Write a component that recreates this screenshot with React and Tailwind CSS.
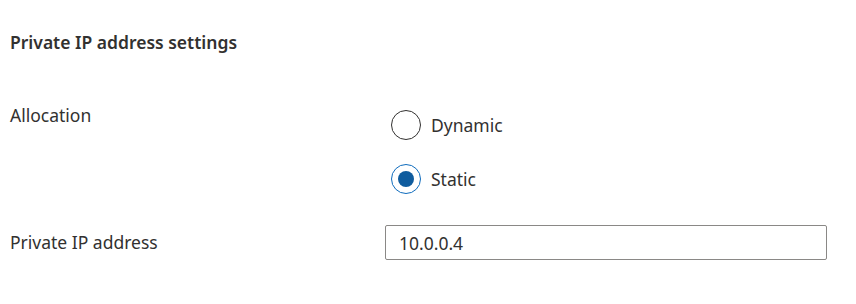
import React, { useState } from "react";

function Radio({ checked, label, onSelect }) {
  return (
    <label className="flex items-center gap-[10px] cursor-pointer" onClick={onSelect}>
      <span
        className={
          "flex h-[30px] w-[30px] items-center justify-center rounded-full border bg-white " +
          (checked ? "border-[#0f6cbd]" : "border-[#323130]")
        }
      >
        {checked && <span className="h-[16px] w-[16px] rounded-full bg-[#0f5c9e]" />}
      </span>
      <span className="text-[17.5px] text-[#323130]">{label}</span>
    </label>
  );
}

export default function App() {
  const [allocation, setAllocation] = useState("static");
  const [ip, setIp] = useState("10.0.0.4");

  return (
    <div
      className="h-[304px] w-[856px] bg-white px-[10px] text-[#323130]"
      style={{ fontFamily: '"Segoe UI", "Noto Sans", sans-serif' }}
    >
      <h2 className="pt-[29px] text-[17.5px] font-semibold leading-[26px]">Private IP address settings</h2>

      <div className="mt-[47px] flex">
        <div className="w-[381px] text-[17.5px] leading-[26px]">Allocation</div>
        <div className="flex flex-col gap-[24px] pt-[8px]">
          <Radio checked={allocation === "dynamic"} label="Dynamic" onSelect={() => setAllocation("dynamic")} />
          <Radio checked={allocation === "static"} label="Static" onSelect={() => setAllocation("static")} />
        </div>
      </div>

      <div className="mt-[31px] flex items-center">
        <div className="w-[375px] text-[17.5px]">Private IP address</div>
        <input
          type="text"
          value={ip}
          onChange={(e) => setIp(e.target.value)}
          className="h-[35px] w-[442px] rounded-[2px] border border-[#8a8886] px-[13px] text-[17.5px] text-[#323130] outline-none"
        />
      </div>
    </div>
  );
}
